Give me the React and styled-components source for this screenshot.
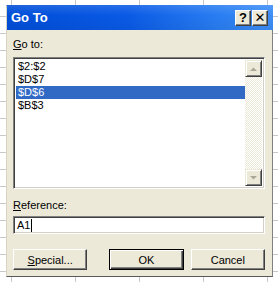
import React from "react";
import styled, { createGlobalStyle } from "styled-components";

const Global = createGlobalStyle`
  html, body { margin: 0; padding: 0; }
  body {
    width: 278px;
    height: 282px;
    overflow: hidden;
    background-color: #fff;
    background-image:
      linear-gradient(to right, #c8c8c8 1px, transparent 1px),
      linear-gradient(to bottom, #c8c8c8 1px, transparent 1px);
    background-size: 64px 17px;
    background-position: 11px 16px;
    font-family: Tahoma, "Liberation Sans", "DejaVu Sans", sans-serif;
    font-size: 11px;
    color: #000;
  }
  #root { padding: 5px 0 0 6px; }
`;

const Window = styled.div`
  width: 267px;
  height: 272px;
  box-sizing: border-box;
  background: #ece9d8;
  border: 1px solid;
  border-color: #3a6fd8 #808080 #5a5a5a #d8d4c4;
  display: flex;
  flex-direction: column;
`;

const TitleBar = styled.div`
  height: 25px;
  margin: -1px -1px 0 0;
  flex-shrink: 0;
  display: flex;
  align-items: center;
  justify-content: space-between;
  padding: 0 4px 0 3px;
  background:
    linear-gradient(to bottom, rgba(255,255,255,0.12), rgba(255,255,255,0) 40%, rgba(0,0,0,0.05)),
    linear-gradient(to right, #004ed8 0%, #0a5ae6 45%, #2a7ef2 80%, #3d8ef6 100%);
`;

const Title = styled.span`
  color: #fff;
  font-family: "Liberation Sans", "DejaVu Sans", sans-serif;
  font-weight: bold;
  font-size: 13px;
  padding-left: 1px;
`;

const TitleButtons = styled.div`
  display: flex;
  gap: 1px;
  margin-right: 1px;
`;

const CaptionButton = styled.div`
  width: 16px;
  height: 16px;
  box-sizing: border-box;
  background: #ece9d8;
  border: 1px solid;
  border-color: #fff #404040 #404040 #fff;
  box-shadow: inset -1px -1px #808080;
  display: flex;
  align-items: center;
  justify-content: center;
  font-family: "Liberation Sans", "DejaVu Sans", sans-serif;
  font-weight: bold;
  font-size: 13px;
  line-height: 1;
  color: #000;
`;

const Body = styled.div`
  flex: 1;
  display: flex;
  flex-direction: column;
  padding: 8px 7px 0 6px;
`;

const Label = styled.div`
  line-height: 13px;
  height: 13px;
  margin-top: ${(p) => p.$mt || 0}px;
`;

const U = styled.span`
  text-decoration: underline;
  text-underline-offset: 1px;
`;

const Sunken = styled.div`
  box-sizing: border-box;
  background: #fff;
  border: 1px solid;
  border-color: #808080 #fff #fff #808080;
  box-shadow: inset 1px 1px #404040, inset -1px -1px #d4d0c8;
`;

const ListBox = styled(Sunken)`
  margin-top: 6px;
  height: 132px;
  display: flex;
  padding: 2px;
`;

const Items = styled.div`
  flex: 1;
  display: flex;
  flex-direction: column;
`;

const Item = styled.div`
  height: 13px;
  line-height: 13px;
  padding-left: 2px;
  background: ${(p) => (p.$selected ? "#316ac5" : "transparent")};
  color: ${(p) => (p.$selected ? "#fff" : "#000")};
`;

const ScrollBar = styled.div`
  width: 17px;
  display: flex;
  flex-direction: column;
  justify-content: space-between;
  background: conic-gradient(#fff 25%, #ece9d8 0 50%, #fff 0 75%, #ece9d8 0) 0 0 / 2px 2px;
`;

const ScrollButton = styled.div`
  width: 17px;
  height: 17px;
  box-sizing: border-box;
  background: #ece9d8;
  border: 1px solid;
  border-color: #ece9d8 #404040 #404040 #ece9d8;
  box-shadow: inset 1px 1px #fff, inset -1px -1px #808080;
  display: flex;
  align-items: center;
  justify-content: center;
`;

const Input = styled(Sunken)`
  margin-top: 4px;
  height: 18px;
  padding: 2px 3px;
  display: flex;
  align-items: center;
  line-height: 13px;
`;

const Caret = styled.span`
  display: inline-block;
  width: 1px;
  height: 13px;
  background: #000;
  margin-left: 1px;
`;

const ButtonRow = styled.div`
  margin-top: 15px;
  display: flex;
`;

const Button = styled.div`
  width: 75px;
  height: 21px;
  box-sizing: border-box;
  background: #ece9d8;
  border: 1px solid;
  border-color: ${(p) => (p.$default ? "#000" : "#fff #404040 #404040 #fff")};
  box-shadow: ${(p) =>
    p.$default
      ? "inset 1px 1px #fff, inset -1px -1px #404040, inset -2px -2px #808080"
      : "inset -1px -1px #808080"};
  display: flex;
  align-items: center;
  justify-content: center;
  margin-left: ${(p) => p.$ml || 0}px;
`;

const Arrow = ({ up }) => (
  <svg width="7" height="4" viewBox="0 0 7 4">
    <path
      d={up ? "M0 4 L3.5 0.5 L7 4 Z" : "M0 0 L3.5 3.5 L7 0 Z"}
      fill="#aca899"
    />
  </svg>
);

export default function App() {
  const items = ["$2:$2", "$D$7", "$D$6", "$B$3"];
  return (
    <>
      <Global />
      <Window>
        <TitleBar>
          <Title>Go To</Title>
          <TitleButtons>
            <CaptionButton>?</CaptionButton>
            <CaptionButton>✕</CaptionButton>
          </TitleButtons>
        </TitleBar>
        <Body>
          <Label>
            <U>G</U>o to:
          </Label>
          <ListBox>
            <Items>
              {items.map((it, i) => (
                <Item key={it} $selected={i === 2}>
                  {it}
                </Item>
              ))}
            </Items>
            <ScrollBar>
              <ScrollButton>
                <Arrow up />
              </ScrollButton>
              <ScrollButton>
                <Arrow />
              </ScrollButton>
            </ScrollBar>
          </ListBox>
          <Label $mt={10}>
            <U>R</U>eference:
          </Label>
          <Input>
            A1
            <Caret />
          </Input>
          <ButtonRow>
            <Button>
              <span>
                <U>S</U>pecial...
              </span>
            </Button>
            <Button $default $ml={22}>OK</Button>
            <Button $ml={7}>Cancel</Button>
          </ButtonRow>
        </Body>
      </Window>
    </>
  );
}
